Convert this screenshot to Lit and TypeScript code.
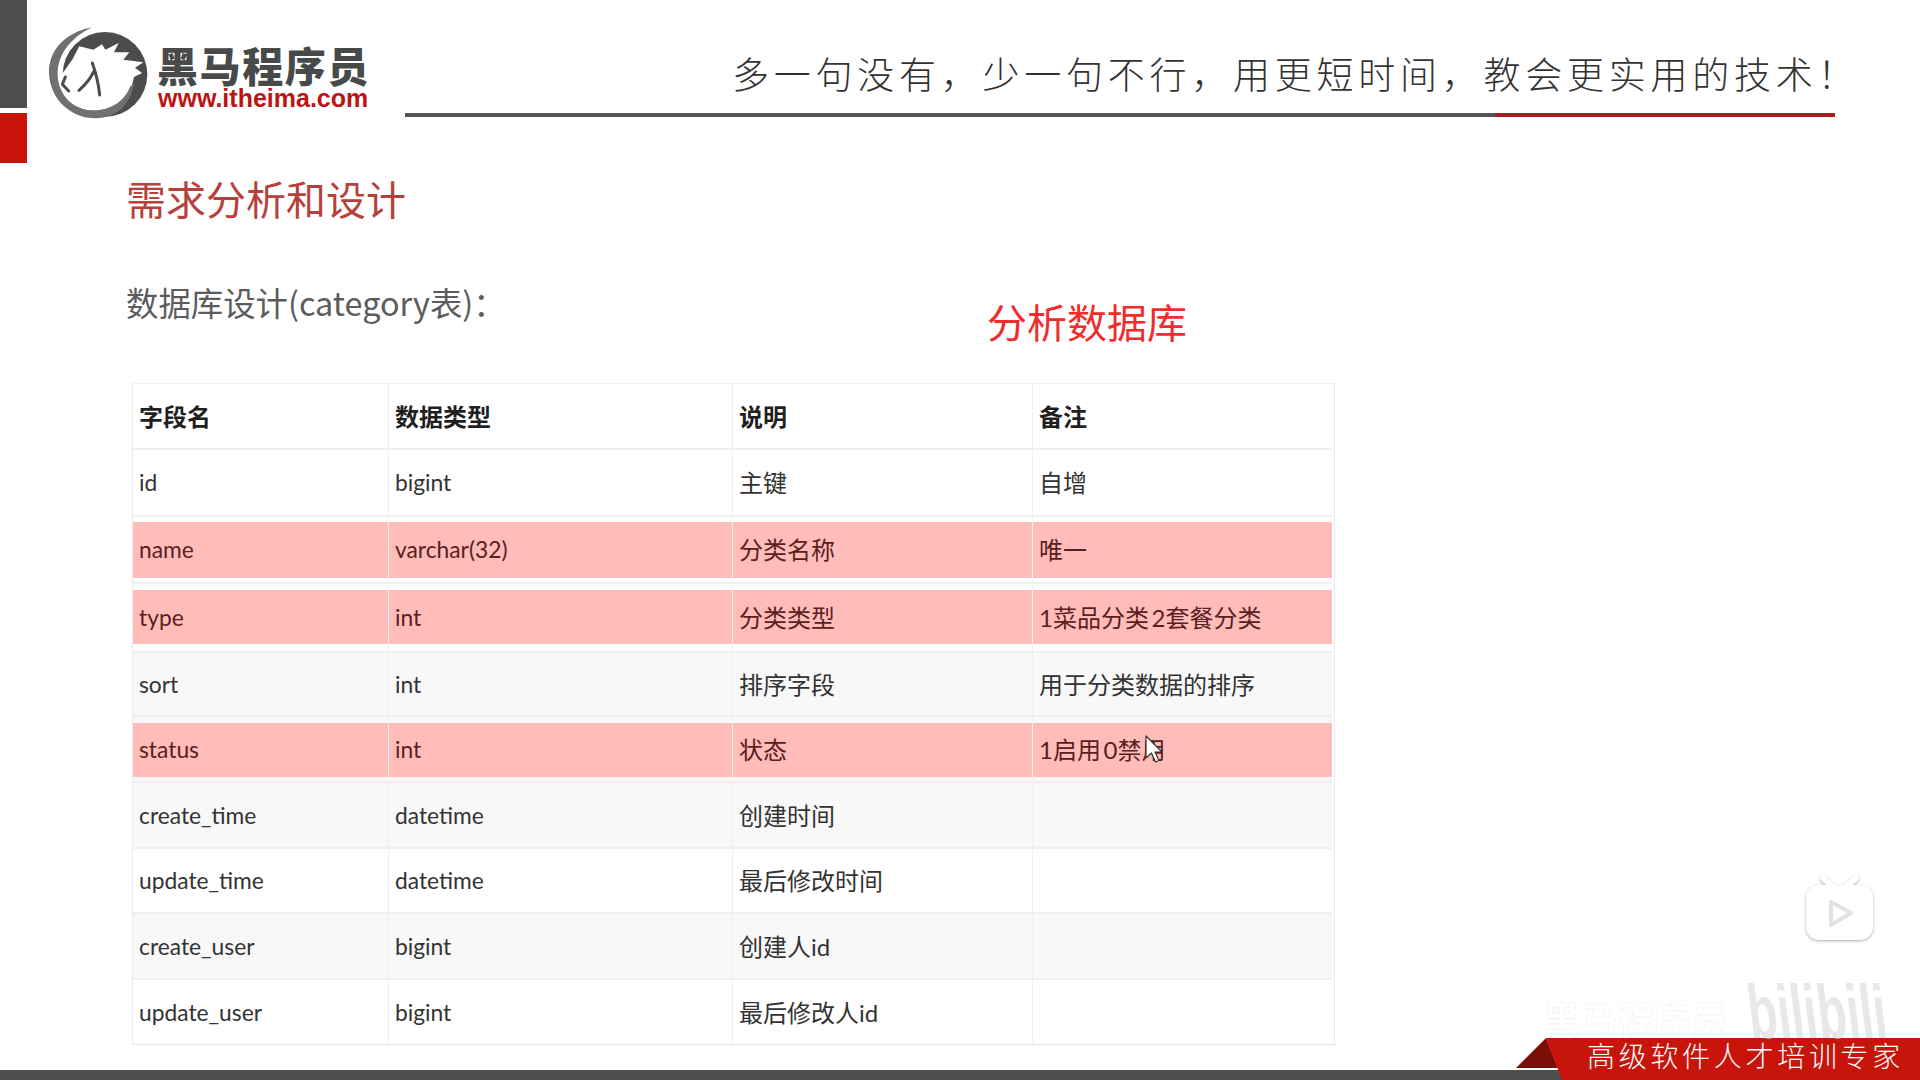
import { LitElement, html, css, svg } from "lit";
import { customElement } from "lit/decorators.js";

type Row = { cells: [string, string, string, string]; tone: string };

const rows: Row[] = [
  { cells: ["id", "bigint", "主键", "自增"], tone: "plain" },
  { cells: ["name", "varchar(32)", "分类名称", "唯一"], tone: "hl first" },
  { cells: ["type", "int", "分类类型", "1菜品分类 2套餐分类"], tone: "hl second" },
  { cells: ["sort", "int", "排序字段", "用于分类数据的排序"], tone: "grey" },
  { cells: ["status", "int", "状态", "1启用 0禁用"], tone: "hl third" },
  { cells: ["create_time", "datetime", "创建时间", ""], tone: "grey" },
  { cells: ["update_time", "datetime", "最后修改时间", ""], tone: "plain" },
  { cells: ["create_user", "bigint", "创建人id", ""], tone: "grey" },
  { cells: ["update_user", "bigint", "最后修改人id", ""], tone: "plain" },
];

const logoMark = svg`
  <circle cx="225" cy="178" r="127" fill="#4b4c4d"></circle>
  <path fill="#fff" d="M148 94 L190 104 L216 88 L226 104 L266 84 L252 112 L298 112 L280 134 L340 142 L315 158 L336 174 L312 186 L305 215 C285 262 235 288 190 288 C140 288 92 250 82 190 L100 172 L128 132 Z"></path>
  <path fill="#6f7072" d="M185 37 C100 55 55 110 57 175 C60 255 125 310 195 310 C255 310 300 275 312 205 L300 215 C282 262 238 286 190 286 C130 286 85 240 83 180 C82 120 120 70 185 37 Z"></path>
  <path fill="none" stroke="#4b4c4d" stroke-width="9" stroke-linecap="round" stroke-linejoin="round" d="M187 144 C197 172 205 200 209 240 M191 170 C182 190 165 210 147 226 M106 186 L97 208 L116 228"></path>
`;

@customElement("app-root")
export class AppRoot extends LitElement {
  static styles = css`
    :host {
      display: block;
      width: 1920px;
      height: 1080px;
      background: #fff;
      overflow: hidden;
      position: relative;
      font-family: "Noto Sans CJK SC", sans-serif;
    }
    .page {
      display: grid;
      grid-template-columns: 27px 1fr;
      grid-template-rows: 1070px 10px;
      height: 1080px;
    }
    .side {
      display: flex;
      flex-direction: column;
      gap: 5px;
    }
    .side .dark { height: 108px; background: #4d4f4e; }
    .side .red { height: 50px; background: #c8130a; }
    .main { display: flex; flex-direction: column; min-width: 0; }
    .header { display: flex; height: 117px; }
    .mark { width: 150px; height: 115px; margin: 15px 0 0 3px; flex: none; }
    .brand { width: 224px; flex: none; margin-left: -23px; padding-top: 43px; }
    .brand .cn {
      font-size: 41px;
      line-height: 42px;
      font-weight: 900;
      color: #484a4a;
      letter-spacing: 1.6px;
      white-space: nowrap;
    }
    .brand .url {
      font-family: "Liberation Sans", sans-serif;
      font-size: 25px;
      line-height: 24px;
      font-weight: 700;
      color: #bb1414;
      margin-left: 1px;
      margin-top: 1px;
    }
    .slogan-box {
      width: 1430px;
      margin-left: 24px;
      display: flex;
      flex-direction: column;
      justify-content: flex-end;
    }
    .slogan {
      padding-left: 327px;
      height: 65px;
      font-size: 37px;
      line-height: 50px;
      letter-spacing: 4.75px;
      font-weight: 300;
      color: #333;
      white-space: nowrap;
    }
    .rule { display: flex; height: 4px; }
    .rule .g { flex: 1; background: #555; }
    .rule .r { width: 340px; background: #a81e1e; }
    .title {
      margin: 53px 0 0 99px;
      font-size: 40px;
      line-height: 56px;
      font-weight: 400;
      color: #b8403a;
    }
    .sub-row { display: flex; margin: 54px 0 0 99px; height: 64px; }
    .sub {
      width: 861px;
      flex: none;
      font-size: 32.4px;
      line-height: 44px;
      font-weight: 400;
      color: #5c5c5c;
    }
    .note {
      margin-top: 19px;
      font-size: 40px;
      line-height: 44px;
      font-weight: 400;
      color: #f02c2c;
    }
    .table {
      margin: 39px 0 0 105px;
      width: 1201px;
      display: grid;
      grid-template-columns: 255px 344px 300px 300px;
      grid-template-rows: 66px 67px 67px 69px 64px 66px 66px 65px 66px 64px;
      border-left: 1px solid #eaeaea;
      border-right: 1px solid #eaeaea;
      border-top: 1px solid #f2f2f2;
      border-bottom: 1px solid #e6e6e6;
      box-sizing: content-box;
      font-family: Lato, "Noto Sans CJK SC", sans-serif;
      font-size: 24px;
      color: #333;
    }
    .row {
      display: grid;
      grid-column: 1 / -1;
      grid-template-columns: subgrid;
      border-bottom: 2px solid #f0f0f0;
      box-sizing: border-box;
    }
    .row:last-child { border-bottom: none; }
    .cell {
      display: flex;
      align-items: center;
      padding: 0 0 2px 6px;
      border-left: 1px solid #f0f0f0;
      white-space: pre;
      word-spacing: -3.5px;
      min-width: 0;
    }
    .cell:first-child { border-left: none; }
    .cell.latin { font-size: 22.8px; padding-bottom: 1px; word-spacing: 0; }
    .head { font-weight: 700; color: #1f1f1f; }
    .grey { background: #f8f8f8; }
    .hl { color: #5a2020; background-repeat: no-repeat; background-image: linear-gradient(#ffbcb9, #ffbcb9); }
    .hl.first { background-position: 0 5px; background-size: 100% 56px; }
    .hl.second { background-position: 0 6px; background-size: 100% 54px; }
    .hl.third { background-position: 0 6px; background-size: 100% 54px; background-color: #f8f8f8; }
    .wm {
      position: absolute;
      left: 1543px;
      top: 999px;
      font-size: 37px;
      line-height: 38px;
      font-weight: 700;
      color: #fff;
      text-shadow: 0 0 2px #e6e6e6;
      white-space: nowrap;
    }
    .bili {
      position: absolute;
      left: 1743px;
      top: 973px;
      font-family: "Liberation Sans", sans-serif;
      font-size: 76px;
      line-height: 78px;
      font-weight: 700;
      color: rgba(224, 224, 224, 0.75);
      transform: skewX(7deg) scaleX(0.63);
      transform-origin: left top;
      white-space: nowrap;
    }
    .foot { grid-column: 1 / -1; background: #4d4f4e; }
    .banner {
      position: absolute;
      left: 1516px;
      top: 1038px;
      width: 404px;
      height: 42px;
    }
    .banner svg { position: absolute; inset: 0; width: 100%; height: 100%; }
    .banner span {
      position: absolute;
      left: 71px;
      top: -4px;
      font-size: 28px;
      line-height: 42px;
      letter-spacing: 3.7px;
      color: #fff;
      font-weight: 300;
      white-space: nowrap;
    }
    .tv {
      position: absolute;
      left: 1800px;
      top: 872px;
      width: 80px;
      height: 76px;
      filter: drop-shadow(0 1px 1.5px rgba(0, 0, 0, 0.32));
    }
    .cursor { position: absolute; left: 1144px; top: 735px; width: 20px; height: 30px; }
  `;

  render() {
    return html`
      <div class="page">
        <div class="side"><div class="dark"></div><div class="red"></div></div>
        <div class="main">
          <div class="header">
            <svg class="mark" viewBox="0 0 450 345">${logoMark}</svg>
            <div class="brand">
              <div class="cn">黑马程序员</div>
              <div class="url">www.itheima.com</div>
            </div>
            <div class="slogan-box">
              <div class="slogan">多一句没有，少一句不行，用更短时间，教会更实用的技术！</div>
              <div class="rule"><div class="g"></div><div class="r"></div></div>
            </div>
          </div>
          <div class="title">需求分析和设计</div>
          <div class="sub-row">
            <div class="sub">数据库设计(category表)：</div>
            <div class="note">分析数据库</div>
          </div>
          <div class="table">
            <div class="row head">
              <div class="cell">字段名</div>
              <div class="cell">数据类型</div>
              <div class="cell">说明</div>
              <div class="cell">备注</div>
            </div>
            ${rows.map(
              (r) => html`<div class="row ${r.tone}">
                <div class="cell latin">${r.cells[0]}</div>
                <div class="cell latin">${r.cells[1]}</div>
                <div class="cell">${r.cells[2]}</div>
                <div class="cell">${r.cells[3]}</div>
              </div>`
            )}
          </div>
        </div>
        <div class="foot"></div>
      </div>

      <svg class="tv" viewBox="0 0 80 76">
        <path d="M23 6 L33 15 M56 6 L46 15" stroke="#fff" stroke-width="6" stroke-linecap="round" fill="none"></path>
        <rect x="6" y="13" width="67" height="55" rx="13" fill="#fff"></rect>
        <path d="M31 30 L51 41 L31 53 Z" fill="#fff" stroke="#e2e2e2" stroke-width="4" stroke-linejoin="round"></path>
      </svg>

      <div class="wm">黑马程序员</div>

      <div class="banner">
        <svg viewBox="0 0 404 42" preserveAspectRatio="none">
          <path d="M30 0 L0 30 L42 30 Z" fill="#7b0f08"></path>
          <path d="M30 0 H404 V42 H46 Z" fill="#c8150c"></path>
        </svg>
        <span>高级软件人才培训专家</span>
      </div>

      <div class="bili">bilibili</div>

      <svg class="cursor" viewBox="0 0 20 30">
        <path d="M2 1 L2 23 L7.5 18 L11.5 27 L15 25.5 L11 17 L18 17 Z" fill="#fff" stroke="#333" stroke-width="1.2" stroke-linejoin="round"></path>
      </svg>
    `;
  }
}
